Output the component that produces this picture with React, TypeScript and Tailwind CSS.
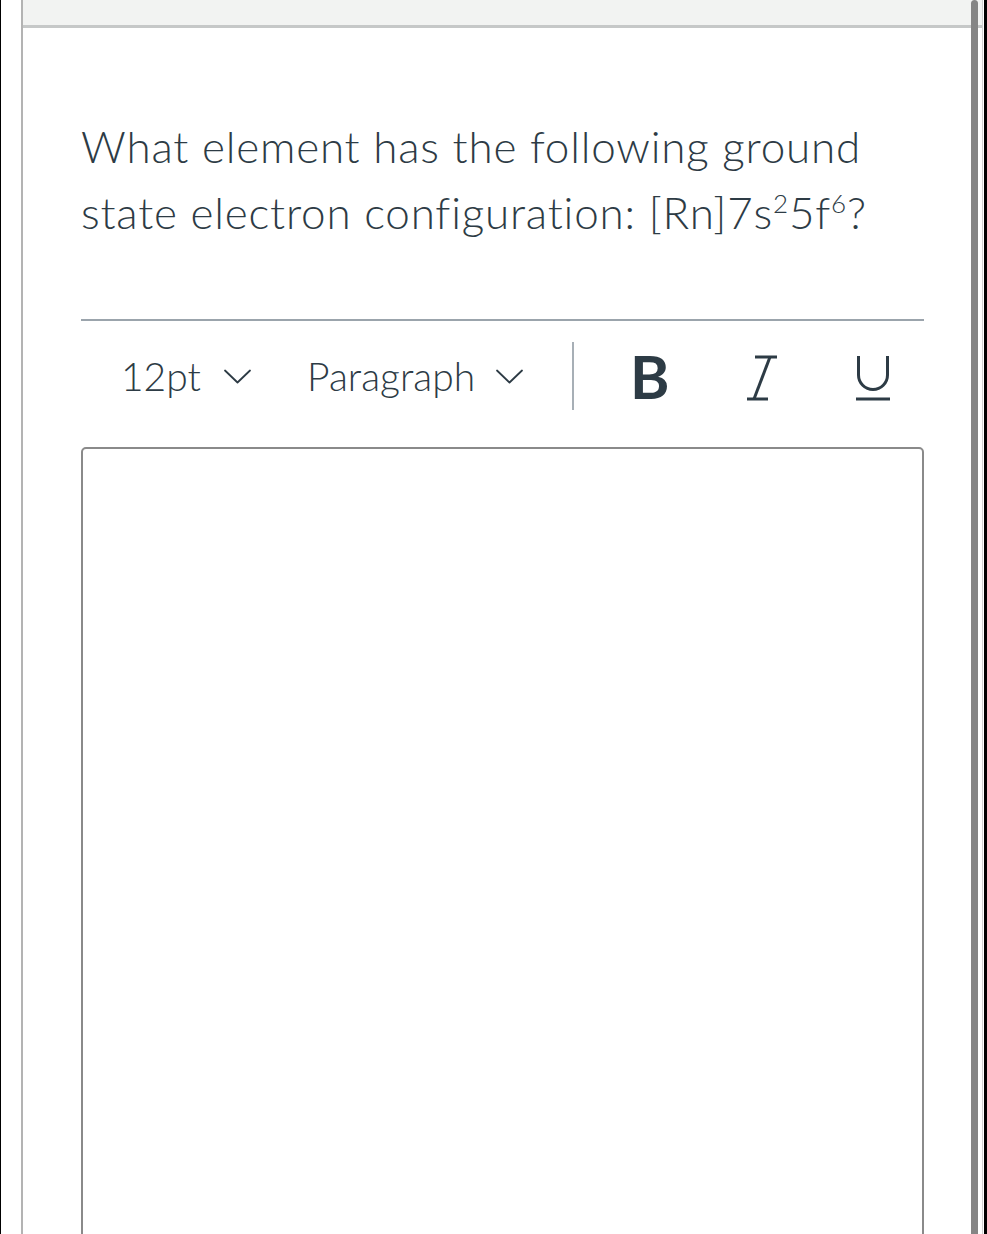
import React from "react";

const Chevron = () => (
  <svg width="27" height="15" viewBox="0 0 27 15" fill="none">
    <path d="M1 1.5 L13.5 13.5 L26 1.5" stroke="#2d3b45" strokeWidth="1.8" strokeLinecap="round" strokeLinejoin="round" />
  </svg>
);

const ItalicIcon = () => (
  <svg width="32" height="46" viewBox="0 0 32 46" fill="none">
    <path d="M9 2 H31" stroke="#2d3b45" strokeWidth="3" />
    <path d="M1 44 H22" stroke="#2d3b45" strokeWidth="3" />
    <path d="M24 2 L8 44" stroke="#2d3b45" strokeWidth="3" />
  </svg>
);

const UnderlineIcon = () => (
  <svg width="36" height="46" viewBox="0 0 36 46" fill="none">
    <path d="M3.5 1 V20 A14.5 14.5 0 0 0 32.5 20 V1" stroke="#2d3b45" strokeWidth="3" />
    <path d="M1 44 H35" stroke="#2d3b45" strokeWidth="3" />
  </svg>
);

export default function App() {
  return (
    <div className="relative flex h-[1234px] w-[987px] overflow-hidden bg-white" style={{ fontFamily: "Lato, 'Noto Sans', sans-serif" }}>
      <div className="w-[1px] shrink-0 bg-black" />
      <div className="w-[20px] shrink-0 bg-white" />
      <div className="w-[2px] shrink-0 bg-[#b3b3b3]" />
      <div className="flex w-[959px] shrink-0 flex-col">
        <div className="h-[25px] shrink-0 bg-[#f2f3f2]" />
        <div className="h-[3px] shrink-0 bg-[#c6c8c8]" />
        <div className="flex shrink-0 flex-col pl-[58px] pt-[85px]">
          <p className="w-[843px] text-[44px] font-light leading-[66px] tracking-[0.8px] text-[#2d3b45]">
            What element has the following ground state electron configuration: [Rn]7s
            <sup className="top-[-0.62em] text-[26px]">2</sup>5f
            <sup className="top-[-0.62em] text-[26px]">6</sup>?
          </p>
          <div className="mt-[74px] h-[2px] w-[843px] bg-[#9ba4ac]" />
          <div className="mt-[21px] flex h-[68px] items-center text-[39px] font-light leading-none text-[#2d3b45]">
            <span className="ml-[40px] w-[103px] whitespace-nowrap">12pt</span>
            <Chevron />
            <span className="ml-[56px] w-[189px] whitespace-nowrap">Paragraph</span>
            <Chevron />
            <div className="ml-[49px] h-[68px] w-[2px] bg-[#a7afb6]" />
            <span className="ml-[56px] text-[60px] font-bold leading-none">B</span>
            <div className="ml-[76px] mt-[4px]"><ItalicIcon /></div>
            <div className="ml-[77px] mt-[4px]"><UnderlineIcon /></div>
          </div>
          <div className="mt-[37px] h-[900px] w-[843px] rounded-[5px] border-2 border-[#8a8a8a] bg-white" />
        </div>
      </div>
      <div className="w-[1px] shrink-0 bg-[#d0d0d0]" />
      <div className="w-[1px] shrink-0 bg-white" />
      <div className="w-[3px] shrink-0 bg-black" />
      <div className="absolute left-[971px] top-0 h-[1234px] w-[7px] rounded-t-full bg-[#858585]" />
    </div>
  );
}
